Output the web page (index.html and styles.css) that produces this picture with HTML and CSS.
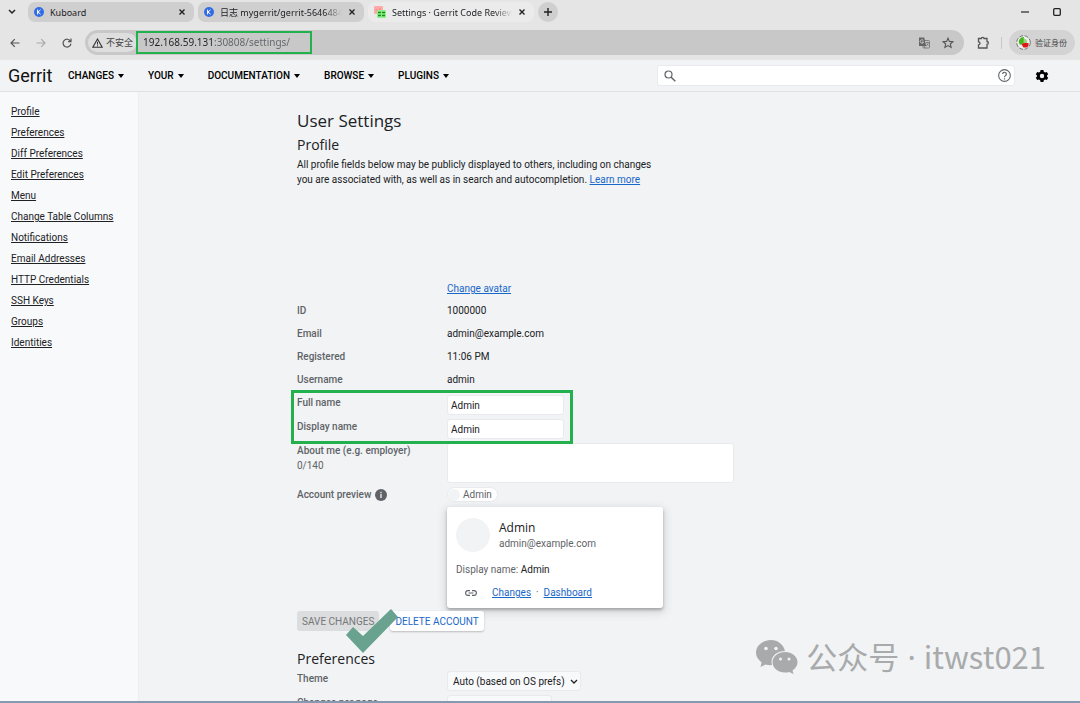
FILE: index.html
```html
<!DOCTYPE html>
<html lang="en">
<head>
  <meta charset="UTF-8" />
  <title>Settings · Gerrit Code Review</title>
  <link rel="stylesheet" href="styles.css">
</head>
<body>
  <div class="browser">
    <div class="tabs">
      <button class="tab-list" aria-label="Search tabs">
        <svg width="8" height="6" viewBox="0 0 8 6"><path d="M1 1l3 3 3-3" fill="none" stroke="#222" stroke-width="1.5"/></svg>
      </button>
      <div class="tab">
        <svg class="favicon" viewBox="0 0 10 10"><circle cx="5" cy="5" r="5" fill="#326ce5"/><path d="M3.6 2.6v4.8M6.6 2.8L4 5l2.6 2.3" fill="none" stroke="#fff" stroke-width="1"/></svg>
        <span class="tab-title">Kuboard</span>
        <button class="close" aria-label="Close tab"><svg width="6" height="6" viewBox="0 0 6 6"><path d="M.5.5l5 5M5.5.5l-5 5" stroke="#222" stroke-width="1.4"/></svg></button>
      </div>
      <div class="tab">
        <svg class="favicon" viewBox="0 0 10 10"><circle cx="5" cy="5" r="5" fill="#326ce5"/><path d="M3.6 2.6v4.8M6.6 2.8L4 5l2.6 2.3" fill="none" stroke="#fff" stroke-width="1"/></svg>
        <span class="tab-title fade">日志 mygerrit/gerrit-5646484c</span>
        <button class="close" aria-label="Close tab"><svg width="6" height="6" viewBox="0 0 6 6"><path d="M.5.5l5 5M5.5.5l-5 5" stroke="#222" stroke-width="1.4"/></svg></button>
      </div>
      <div class="tab active">
        <svg class="favicon wide" viewBox="0 0 12 12"><rect width="9" height="8" rx="1" fill="#ffa9a9"/><path d="M1.5 4h2M5 3h2" stroke="#ff7c7c"/><rect x="3" y="4" width="9" height="8" rx="1" fill="#8df08d"/><path d="M4 6.5h3M8 6.5h3M4 9.5h3M8 9.5h3" stroke="#159015" stroke-width="1.6"/></svg>
        <span class="tab-title fade">Settings · Gerrit Code Review</span>
        <button class="close" aria-label="Close tab"><svg width="6" height="6" viewBox="0 0 6 6"><path d="M.5.5l5 5M5.5.5l-5 5" stroke="#222" stroke-width="1.4"/></svg></button>
      </div>
      <button class="new-tab" aria-label="New tab"><svg width="8" height="8" viewBox="0 0 8 8"><path d="M4 0v8M0 4h8" stroke="#222" stroke-width="1.4"/></svg></button>
      <div class="window-buttons">
        <button aria-label="Minimize"><svg width="8" height="8" viewBox="0 0 8 8"><path d="M0 4h8" stroke="#333" stroke-width="1.3"/></svg></button>
        <button aria-label="Maximize"><svg width="8" height="8" viewBox="0 0 8 8"><rect x=".7" y=".7" width="6.6" height="6.6" rx="1" fill="none" stroke="#222" stroke-width="1.3"/></svg></button>
      </div>
    </div>

    <div class="toolbar">
      <div class="history">
        <button aria-label="Back"><svg width="10" height="10" viewBox="0 0 10 10"><path d="M9.5 5H1M4.8 1.2L1 5l3.8 3.8" fill="none" stroke="#555" stroke-width="1.2"/></svg></button>
        <button aria-label="Forward"><svg width="10" height="10" viewBox="0 0 10 10"><path d="M.5 5H9M5.2 1.2L9 5 5.2 8.8" fill="none" stroke="#aaa" stroke-width="1.2"/></svg></button>
        <button aria-label="Reload"><svg width="10" height="10" viewBox="0 0 10 10"><path d="M8.3 3A3.9 3.9 0 1 0 8.9 5.6M9 .6v3H6" fill="none" stroke="#555" stroke-width="1.2"/></svg></button>
      </div>
      <div class="omnibox">
        <button class="security">
          <svg width="11" height="10" viewBox="0 0 11 10"><path d="M5.5 1L10.2 9.3H.8z" fill="none" stroke="#333" stroke-width="1.1"/><path d="M5.5 3.8v2.700M5.5 7.3v1" stroke="#333"/></svg>
          不安全
        </button>
        <div class="url">
          <input type="text" aria-label="Address" value="192.168.59.131:30808/settings/" />
        </div>
        <button aria-label="Translate"><svg width="12" height="12" viewBox="0 0 12 12"><rect x="5" y="3.5" width="6.5" height="7.5" rx=".8" fill="none" stroke="#777" stroke-width=".9"/><path d="M1 .5h5.2l2 8.500H1z" fill="#666"/><path d="M5.3 3.400A1.700 1.700 0 1 0 5.600 5H4" fill="none" stroke="#ddd" stroke-width=".8"/><path d="M7.800 5.500h3M9.300 5v1M10.300 5.800c-.2 1.500-1 2.500-2 3M8.500 6.800l2 2M6.500 9l.5 2" fill="none" stroke="#666" stroke-width=".7"/></svg></button>
        <button aria-label="Bookmark"><svg width="12" height="12" viewBox="0 0 12 12"><path d="M6 1.200l1.400 3.200 3.500.3-2.600 2.300.8 3.400L6 8.600l-3.100 1.800.8-3.400L1.100 4.700l3.500-.3z" fill="none" stroke="#555" stroke-width="1.1"/></svg></button>
      </div>
      <button class="extensions" aria-label="Extensions"><svg width="13" height="13" viewBox="0 0 13 13"><path d="M1.500 2.500H4.300a1.400 1.200 0 0 1 2.800 0H10v3a1.300 1.400 0 0 1 0 2.900V12H1.500V8.800a1.500 1.500 0 0 0 0-3z" fill="none" stroke="#555" stroke-width="1.3"/></svg></button>
      <span class="divider"></span>
      <button class="account">
        <svg width="15" height="15" viewBox="0 0 15 15"><circle cx="7.500" cy="7.500" r="6.800" fill="#eee" stroke="#666" stroke-width=".9" stroke-dasharray="4 1.500"/><path d="M7.800 2a4.500 4.500 0 0 0-3.500 7.800l3.500-1z" fill="#49b51c"/><path d="M8 3.500a4 4 0 0 1 3 4.500H8z" fill="#9bd37c"/><path d="M5.500 9.500L8 8h4.500v3l-2 1.500h-3z" fill="#df1717"/></svg>
        验证身份
      </button>
    </div>
  </div>

  <header class="header">
    <a class="logo" href="#">Gerrit</a>
    <nav class="menu">
      <button>CHANGES</button>
      <button>YOUR</button>
      <button>DOCUMENTATION</button>
      <button>BROWSE</button>
      <button>PLUGINS</button>
    </nav>
    <div class="search">
      <svg width="12" height="12" viewBox="0 0 12 12"><circle cx="4.500" cy="4.500" r="3.500" fill="none" stroke="#5f6368" stroke-width="1.2"/><path d="M7.200 7.200l4.100 4.100" stroke="#5f6368" stroke-width="1.5"/></svg>
      <input type="text" aria-label="Search" />
      <a href="#" aria-label="Search help"><svg width="13" height="13" viewBox="0 0 12 12"><circle cx="6" cy="6" r="5.400" fill="none" stroke="#5f6368"/><path d="M4.300 4.700a1.700 1.700 0 1 1 2.700 1.400C6.300 6.600 6 6.900 6 7.700M6 8.500v1.200" fill="none" stroke="#5f6368" stroke-width="1.1"/></svg></a>
    </div>
    <a class="gear" href="#" aria-label="Settings"><svg width="14" height="14" viewBox="0 0 14 14"><path d="M5.600 1h2.800l.4 1.700 1.300.7 1.700-.5 1.400 2.400L12 6.500v1l1.200 1.200-1.400 2.400-1.700-.5-1.300.7-.4 1.700H5.600l-.4-1.700-1.300-.7-1.700.5L.8 8.700 2 7.500v-1L.8 5.300l1.400-2.400 1.700.5 1.300-.7zM7 4.800a2.200 2.200 0 1 0 0 4.400 2.200 2.200 0 0 0 0-4.400z" fill="#000" fill-rule="evenodd"/></svg></a>
  </header>

  <div class="page">
    <nav class="sidebar">
      <a href="#profile">Profile</a>
      <a href="#preferences">Preferences</a>
      <a href="#">Diff Preferences</a>
      <a href="#">Edit Preferences</a>
      <a href="#">Menu</a>
      <a href="#">Change Table Columns</a>
      <a href="#">Notifications</a>
      <a href="#">Email Addresses</a>
      <a href="#">HTTP Credentials</a>
      <a href="#">SSH Keys</a>
      <a href="#">Groups</a>
      <a href="#">Identities</a>
    </nav>

    <main class="main">
      <div class="settings">
        <h1>User Settings</h1>
        <h2 id="profile">Profile</h2>
        <p class="intro">All profile fields below may be publicly displayed to others, including on changes you are associated with, as well as in search and autocompletion. <a href="#">Learn more</a></p>

        <div class="row avatar-row"><span class="title"></span><a href="#">Change avatar</a></div>
        <div class="row"><span class="title">ID</span><span class="value">1000000</span></div>
        <div class="row"><span class="title">Email</span><span class="value">admin@example.com</span></div>
        <div class="row"><span class="title">Registered</span><span class="value">11:06 PM</span></div>
        <div class="row"><span class="title">Username</span><span class="value">admin</span></div>
        <div class="names">
          <div class="row field"><label class="title" for="fullName">Full name</label><input type="text" id="fullName" value="Admin" /></div>
          <div class="row field"><label class="title" for="displayName">Display name</label><input type="text" id="displayName" value="Admin" /></div>
        </div>
        <div class="row field">
          <label class="title" for="about">About me (e.g. employer)<br><span class="count">0/140</span></label>
          <textarea id="about"></textarea>
        </div>
        <div class="row field">
          <span class="title">Account preview
            <svg class="info" width="12" height="12" viewBox="0 0 12 12"><circle cx="6" cy="6" r="6" fill="#5f6368"/><path d="M6 5v4M6 2.800v1.400" stroke="#f1f3f4" stroke-width="1.3"/></svg>
          </span>
          <div>
            <span class="chip"><span class="chip-avatar"></span>Admin</span>
            <div class="card">
              <div class="card-head">
                <span class="card-avatar"></span>
                <div>
                  <div class="card-name">Admin</div>
                  <div class="card-email">admin@example.com</div>
                </div>
              </div>
              <div class="card-display">Display name: <b>Admin</b></div>
              <div class="card-links">
                <svg width="12" height="6" viewBox="0 0 12 6"><path d="M5 .6H3a2.400 2.400 0 0 0 0 4.800h2M7 .6h2a2.400 2.400 0 0 1 0 4.800H7M3.500 3h5" fill="none" stroke="#5f6368" stroke-width="1.1"/></svg>
                <span><a href="#">Changes</a> &nbsp;·&nbsp; <a href="#">Dashboard</a></span>
              </div>
            </div>
          </div>
        </div>

        <div class="actions">
          <button class="save" disabled>SAVE CHANGES</button>
          <button class="delete">DELETE ACCOUNT</button>
          <svg class="check" width="54" height="44" viewBox="0 0 54 44"><path d="M1 26l7-8 10 9L46 0l7 8-35 36z" fill="#69a38f"/></svg>
        </div>

        <h2 id="preferences">Preferences</h2>
        <div class="row field">
          <label class="title" for="theme">Theme</label>
          <div class="select theme">
            <select id="theme"><option>Auto (based on OS prefs)</option><option>Light</option><option>Dark</option></select>
            <svg width="8" height="6" viewBox="0 0 8 6"><path d="M1 1l3 3 3-3" fill="none" stroke="#222" stroke-width="1.3"/></svg>
          </div>
        </div>
        <div class="row field">
          <label class="title" for="perPage">Changes per page</label>
          <div class="select per-page">
            <select id="perPage"><option>25</option><option>50</option><option>100</option></select>
            <svg width="8" height="6" viewBox="0 0 8 6"><path d="M1 1l3 3 3-3" fill="none" stroke="#222" stroke-width="1.3"/></svg>
          </div>
        </div>
      </div>

      <div class="watermark">
        <svg width="42" height="34" viewBox="0 0 42 34">
          <path d="M15 0C6.500 0 0 5.600 0 12.600c0 4 2.200 7.500 5.600 9.800L4.500 27l5-2.600c2 .6 4.200.9 6.500.7A12 12 0 0 1 15.500 22C15.500 15.500 21.500 11 29 11 27.500 4.700 22 0 15 0z"/>
          <path d="M29 12c-7 0-12.500 4.600-12.500 10.300S22 32.500 29 32.500c1.500 0 2.900-.2 4.200-.6l4.300 2.100-1-3.600c3-1.900 5-4.800 5-8.100C41.500 16.600 36 12 29 12z"/>
          <g class="eyes"><circle cx="10" cy="8.500" r="1.800"/><circle cx="20" cy="8.500" r="1.800"/><circle cx="24.500" cy="19" r="1.500"/><circle cx="33" cy="19" r="1.500"/></g>
        </svg>
        <span>公众号<span class="dot"> · </span>itwst021</span>
      </div>
    </main>
  </div>
</body>
</html>
```
FILE: styles.css
```css
*, *::before, *::after {
  box-sizing: border-box;
}
body {
  margin: 0;
  height: 100vh;
  display: flex;
  flex-direction: column;
  overflow: hidden;
  background: #f1f3f4;
  border-bottom: 2px solid #8798b0;
  color: #202124;
  font-family: Roboto, "Noto Sans CJK SC", sans-serif;
  font-size: 10px;
  line-height: 15px;
}
button, input, select, textarea {
  font: inherit;
  color: inherit;
  margin: 0;
  padding: 0;
  border: 0;
  background: none;
}
button {
  display: flex;
  align-items: center;
  justify-content: center;
}
svg {
  display: block;
  flex: none;
}
a {
  color: #1967c8;
}

/* browser window */
.browser {
  background: #e5e5e5;
  font-family: "Noto Sans", "Noto Sans CJK SC", sans-serif;
}
.tabs {
  display: flex;
  align-items: center;
  height: 26px;
  padding: 0 19px 2px 0;
  gap: 4px;
}
.tab-list {
  width: 24px;
  height: 20px;
}
.tab {
  display: flex;
  align-items: center;
  gap: 6px;
  width: 166px;
  height: 20px;
  padding: 0 8px 0 6px;
  border-radius: 7px;
  background: #cfcfcf;
}
.tab.active {
  background: #ebebeb;
}
.favicon {
  width: 10px;
  height: 10px;
}
.favicon.wide {
  width: 12px;
  height: 12px;
}
.tab-title {
  flex: 1;
  overflow: hidden;
  font-size: 9px;
  white-space: nowrap;
}
.fade {
  mask-image: linear-gradient(to right, #000 85%, transparent);
}
.close {
  width: 8px;
  height: 12px;
}
.new-tab {
  width: 20px;
  height: 20px;
  border-radius: 50%;
  background: #cfcfcf;
}
.window-buttons {
  display: flex;
  gap: 24px;
  margin-left: auto;
}
.toolbar {
  display: flex;
  align-items: center;
  height: 34px;
  padding: 0 5px 1px 10px;
}
.history {
  display: flex;
  gap: 16px;
  width: 75px;
}
.omnibox {
  flex: 1;
  display: flex;
  align-items: center;
  gap: 12px;
  height: 25px;
  padding: 0 10px 0 3px;
  border-radius: 13px;
  background: #c8c8c8;
}
.security {
  gap: 3px;
  height: 19px;
  padding: 0 4px;
  border-radius: 10px;
  background: #dedede;
  color: #444;
  font-size: 9px;
  margin-right: -14px;
}
.url {
  position: relative;
  flex: 1;
  padding-left: 8px;
}
.url::after {
  content: "";
  position: absolute;
  left: 1px;
  top: -4px;
  width: 176px;
  height: 23px;
  border: 2px solid #22b14c;
  pointer-events: none;
}
.url input {
  display: block;
  width: 100%;
  height: 15px;
  background: linear-gradient(to right, #202124 71px, #5f6368 71px);
  background-clip: text;
  color: transparent;
}
.extensions {
  margin-left: 13px;
}
.divider {
  width: 1px;
  height: 12px;
  margin: 0 7px 0 11px;
  background: #c8c8c8;
}
.account {
  gap: 4px;
  height: 25px;
  padding: 0 8px 0 7px;
  border-radius: 13px;
  background: #d3d3d3;
  color: #444;
  font-size: 8px;
}

/* gerrit header */
.header {
  display: flex;
  align-items: center;
  height: 32px;
  flex: none;
  padding: 0 31px 0 8px;
  border-bottom: 1px solid #e0e2e5;
}
.logo {
  width: 60px;
  color: #111;
  font-size: 18px;
  text-decoration: none;
}
.menu {
  display: flex;
  gap: 24px;
}
.menu button {
  gap: 4px;
  color: #000;
  font-weight: 500;
}
.menu button::after {
  content: "";
  border: 4px solid transparent;
  border-width: 4px 3px 0;
  border-top-color: #000;
}
.search {
  display: flex;
  align-items: center;
  width: 358px;
  height: 21px;
  margin-left: auto;
  padding: 0 3px 0 6px;
  border: 1px solid #e8eaed;
  border-radius: 3px;
  background: #fff;
}
.search input {
  flex: 1;
  min-width: 0;
}
.gear {
  margin-left: 20px;
}

/* page */
.page {
  flex: 1;
  display: flex;
  min-height: 0;
}
.sidebar {
  display: flex;
  flex-direction: column;
  flex: none;
  width: 139px;
  padding: 9px 11px;
  border-right: 1px solid #eceef0;
  background: #f8f9fb;
}
.sidebar a {
  color: #202124;
  line-height: 21px;
}
.main {
  position: relative;
  flex: 1;
  overflow: hidden;
}
.settings {
  max-width: 625px;
  margin: 0 auto;
  padding-top: 17px;
}
h1, h2 {
  margin: 0;
  font-family: "Open Sans", sans-serif;
  font-weight: 400;
}
h1 {
  margin-bottom: 4px;
  font-size: 17px;
  line-height: 24px;
}
h2 {
  font-size: 14px;
  line-height: 16px;
}
.intro {
  max-width: 360px;
  margin: 4px 0 0;
}
.row {
  display: flex;
  padding: 4px 0;
}
.avatar-row {
  height: 112px;
  align-items: flex-end;
  padding-bottom: 3px;
}
.title {
  flex: none;
  width: 150px;
  color: #5f6368;
  font-weight: 500;
}
.count {
  font-weight: 400;
}
.field {
  padding-bottom: 0;
}
.row input, .row textarea, .select {
  border: 1px solid #e8eaed;
  border-radius: 3px;
  background: #fff;
}
.row input {
  width: 117px;
  height: 20px;
  padding: 0 3px;
}
.row textarea {
  width: 287px;
  height: 40px;
  resize: none;
}
.names {
  position: relative;
}
.names::after {
  content: "";
  position: absolute;
  left: -6px;
  top: -1px;
  width: 282px;
  height: 54px;
  border: 3px solid #22b14c;
  pointer-events: none;
}
.info {
  display: inline-block;
  margin-left: 1px;
  vertical-align: -3px;
}
.chip {
  display: flex;
  align-items: center;
  gap: 3px;
  width: 51px;
  height: 15px;
  border: 1px solid #e8eaed;
  border-radius: 8px;
  background: #fff;
  color: #5f6368;
}
.chip-avatar {
  width: 12px;
  height: 12px;
  border-radius: 50%;
  background: #f1f3f4;
}
.card {
  width: 216px;
  margin-top: 5px;
  padding: 11px 9px 8px;
  border-radius: 3px;
  background: #fff;
  box-shadow: 0 2px 3px rgba(60,64,67,0.35), 0 3px 9px 2px rgba(60,64,67,0.15);
  color: #5f6368;
}
.card-head {
  display: flex;
  align-items: center;
  gap: 9px;
}
.card-avatar {
  width: 34px;
  height: 34px;
  border-radius: 50%;
  background: #f1f3f4;
}
.card-name {
  color: #202124;
  font-family: "Open Sans", sans-serif;
  font-size: 12px;
  line-height: 17px;
}
.card-display {
  margin-top: 10px;
}
.card-display b {
  color: #202124;
  font-weight: 400;
}
.card-links {
  display: flex;
  align-items: center;
  gap: 15px;
  margin-top: 8px;
  padding-left: 9px;
}
.actions {
  position: relative;
  display: flex;
  gap: 11px;
  margin: 3px 0 20px;
}
.actions button {
  height: 20px;
  padding: 0 5px;
  border-radius: 3px;
}
.save {
  background: #dcddde;
  color: #757779;
}
.delete {
  background: #fff;
  color: #1967c8;
  box-shadow: 0 1px 2px rgba(60,64,67,0.3);
}
.check {
  position: absolute;
  left: 48px;
  top: -2px;
}
.select {
  position: relative;
  height: 20px;
  background: #f8f9fa;
}
.select select {
  appearance: none;
  display: block;
  width: 100%;
  height: 18px;
  padding: 0 5px;
}
.select svg {
  position: absolute;
  right: 2px;
  top: 7px;
  pointer-events: none;
}
.theme {
  width: 134px;
}
.per-page {
  width: 105px;
}

.watermark {
  position: absolute;
  right: 34px;
  bottom: 22px;
  display: flex;
  align-items: center;
  gap: 8px;
  color: #a8aaab;
  font-family: "Noto Sans CJK SC", sans-serif;
  font-size: 31px;
  line-height: 44px;
}
.watermark svg {
  fill: #a8aaab;
}
.watermark .eyes {
  fill: #f1f3f4;
}
.dot {
  font-family: "Noto Sans", sans-serif;
}
```
